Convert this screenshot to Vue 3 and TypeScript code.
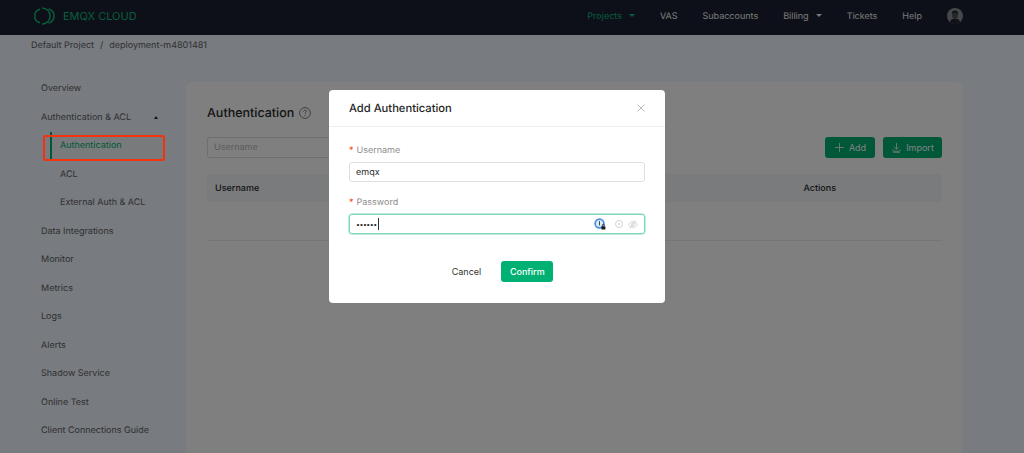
<template>
  <div class="page">
    <header class="topbar">
      <div class="brand">
        <svg class="brand-logo" width="26" height="18" viewBox="0 0 26 18" fill="none">
          <path d="M9 2.200A7 7 0 0 0 9 15.800" />
          <path d="M11 .9A8.100 8.100 0 0 1 11 17.100" />
          <path d="M17.500 2A7.200 7.200 0 0 1 17.500 16" />
        </svg>
        <span class="brand-name">EMQX CLOUD</span>
      </div>
      <nav class="nav">
        <a
          v-for="item in navItems"
          :key="item.label"
          class="nav-item"
          :class="{ active: item.active, caret: item.caret }"
        >{{ item.label }}</a>
        <svg class="avatar" width="16" height="16" viewBox="0 0 16 16">
          <circle cx="8" cy="8" r="8" fill="#8a9096" />
          <ellipse cx="8" cy="7" rx="3" ry="3.600" fill="#4a4c50" />
          <path d="M2.800 14.200c.8-2.600 2.800-3.600 5.200-3.600s4.400 1 5.200 3.600A8 8 0 0 1 2.800 14.200z" fill="#23252e" />
          <path d="M4.800 6c0-2.400 1.400-3.400 3.200-3.400s3.200 1 3.200 3.400c-1-1-2-1.400-3.200-1.400S5.800 5 4.800 6z" fill="#1c1d22" />
        </svg>
      </nav>
    </header>

    <div class="breadcrumb">
      <span>Default Project</span>
      <span class="sep">/</span>
      <span>deployment-m4801481</span>
    </div>

    <div class="body">
      <aside class="sidebar">
        <div
          v-for="item in menu"
          :key="item.label"
          class="menu-item"
          :class="{ sub: item.sub, selected: item.selected }"
        >
          {{ item.label }}
          <i v-if="item.open" class="menu-caret"></i>
        </div>
      </aside>

      <main class="card">
        <div class="title-row">
          <h2>Authentication</h2>
          <svg width="12" height="12" viewBox="0 0 12 12" fill="none" stroke="#5c5c5c">
            <circle cx="6" cy="6" r="5.400" stroke-width=".8" />
            <path d="M4.500 4.700c0-.9.7-1.500 1.500-1.500s1.500.6 1.500 1.400c0 1.200-1.500 1.200-1.500 2.400" stroke-width=".8" />
            <path d="M6 8.200v.9" stroke-width=".9" />
          </svg>
        </div>

        <div class="toolbar">
          <div class="search">Username</div>
          <div class="actions">
            <button class="btn">
              <svg width="11" height="11" viewBox="0 0 11 11" fill="none" stroke="currentColor" stroke-width=".8">
                <path d="M5.500 1v9M1 5.500h9" />
              </svg>
              Add
            </button>
            <button class="btn">
              <svg width="11" height="11" viewBox="0 0 11 11" fill="none" stroke="currentColor" stroke-width=".8">
                <path d="M5.500 1v6M3 4.800l2.500 2.500L8 4.800M1.500 7.500c0 1.200.6 1.700 1.500 1.700h5c.9 0 1.500-.5 1.500-1.700M2 10.300h7" />
              </svg>
              Import
            </button>
          </div>
        </div>

        <div class="table-head">
          <span>Username</span>
          <span>Actions</span>
        </div>
        <div class="table-empty"></div>
      </main>
    </div>

    <div class="mark"></div>
    <div class="mask"></div>

    <section class="modal">
      <div class="modal-head">
        <h3>Add Authentication</h3>
        <svg width="8" height="8" viewBox="0 0 8 8" stroke="#a8a8a8" stroke-width=".8">
          <path d="M.5.500l7 7M7.500.500l-7 7" />
        </svg>
      </div>
      <div class="modal-body">
        <label class="field-label">Username</label>
        <div class="field">emqx</div>
        <label class="field-label">Password</label>
        <div class="field focus">
          <span class="dots">••••••</span><i class="cursor"></i>
          <span class="field-icons">
            <svg width="12" height="12" viewBox="0 0 12 12">
              <circle cx="5.500" cy="5.500" r="5.200" fill="#4a90e2" />
              <circle cx="5.500" cy="5.500" r="3.500" fill="#dfe9f4" />
              <rect x="5" y="3.200" width="1" height="4.200" fill="#3a4654" />
              <rect x="7.400" y="8.200" width="4" height="3.300" rx=".5" fill="#1c1c1c" />
              <path d="M8.300 8.200V7.400a1.100 1.100 0 0 1 2.200 0v.8" fill="none" stroke="#1c1c1c" stroke-width=".7" />
            </svg>
            <svg class="clear" width="8" height="8" viewBox="0 0 10 10" fill="none" stroke="#c4c4c4" stroke-width=".9">
              <circle cx="5" cy="5" r="4.400" />
              <circle cx="5" cy="5" r="1.100" fill="#c4c4c4" stroke="none" />
            </svg>
            <svg width="10" height="9" viewBox="0 0 11 10" fill="none" stroke="#c4c4c4" stroke-width=".8">
              <path d="M.6 5C2 2.800 3.600 1.800 5.500 1.800S9 2.800 10.400 5C9 7.200 7.400 8.200 5.500 8.200S2 7.200.6 5z" />
              <circle cx="5.500" cy="5" r="1.700" />
              <path d="M2 9l7-8" />
            </svg>
          </span>
        </div>
      </div>
      <div class="modal-foot">
        <button class="link-btn">Cancel</button>
        <button class="primary-btn">Confirm</button>
      </div>
    </section>
  </div>
</template>

<script setup lang="ts">
interface NavItem {
  label: string
  active?: boolean
  caret?: boolean
}

interface MenuItem {
  label: string
  sub?: boolean
  open?: boolean
  selected?: boolean
}

const navItems: NavItem[] = [
  { label: 'Projects', active: true, caret: true },
  { label: 'VAS' },
  { label: 'Subaccounts' },
  { label: 'Billing', caret: true },
  { label: 'Tickets' },
  { label: 'Help' },
]

const menu: MenuItem[] = [
  { label: 'Overview' },
  { label: 'Authentication & ACL', open: true },
  { label: 'Authentication', sub: true, selected: true },
  { label: 'ACL', sub: true },
  { label: 'External Auth & ACL', sub: true },
  { label: 'Data Integrations' },
  { label: 'Monitor' },
  { label: 'Metrics' },
  { label: 'Logs' },
  { label: 'Alerts' },
  { label: 'Shadow Service' },
  { label: 'Online Test' },
  { label: 'Client Connections Guide' },
]
</script>

<style>
html,
body {
  margin: 0;
  overflow: hidden;
}
</style>

<style scoped>
.page {
  position: relative;
  width: 1024px;
  height: 453px;
  overflow: hidden;
  background: #f0f6ff;
  font-family: Inter, "Liberation Sans", sans-serif;
  font-size: 9px;
  text-rendering: geometricPrecision;
  color: #5f6165;
}

.topbar {
  box-sizing: border-box;
  height: 35px;
  display: flex;
  align-items: center;
  justify-content: space-between;
  padding: 0 61px 3px 31px;
  background: #1a2030;
}

.brand {
  display: flex;
  align-items: center;
  gap: 6px;
}

.brand-logo path {
  stroke: #12b87a;
  stroke-width: 1.500;
}

.brand-name {
  font-size: 11px;
  color: #12b87a;
}

.nav {
  display: flex;
  align-items: center;
}

.nav-item {
  margin-right: 25px;
  color: #f0f0f0;
  white-space: nowrap;
}

.nav-item.active {
  color: #12b87a;
}

.nav-item.caret::after {
  content: '';
  display: inline-block;
  margin-left: 7px;
  vertical-align: 2px;
  border: 3px solid transparent;
  border-top: 3px solid currentColor;
  border-bottom: 0;
}

.breadcrumb {
  height: 20px;
  display: flex;
  align-items: center;
  padding-left: 31px;
  color: #5e6166;
}

.sep {
  margin: 0 6px 0 6px;
}

.body {
  display: flex;
  padding-top: 27px;
}

.sidebar {
  width: 186px;
  flex-shrink: 0;
  margin-top: -7px;
}

.menu-item {
  position: relative;
  height: 28.500px;
  line-height: 28.500px;
  padding-left: 41px;
  color: #5f6165;
  white-space: nowrap;
}

.menu-item.sub {
  margin-left: 50px;
  padding-left: 10px;
  width: 105px;
}

.menu-item.selected {
  background: #f0f5f6;
  border-left: 2px solid #00b173;
  padding-left: 8px;
  color: #00b173;
}

.menu-caret {
  position: absolute;
  left: 154px;
  top: 12px;
  border: 2.500px solid transparent;
  border-bottom: 3px solid #2a2a2a;
  border-top: 0;
}

.card {
  flex: 1;
  margin-right: 61px;
  height: 400px;
  padding: 21px 21px;
  border-radius: 6px;
  background: #fff;
}

.title-row {
  display: flex;
  align-items: center;
  gap: 5px;
  height: 20px;
}

.title-row h2 {
  margin: 0;
  font-size: 12.500px;
  font-weight: 500;
  color: #2a2a2a;
}

.toolbar {
  display: flex;
  justify-content: space-between;
  margin-top: 14px;
}

.search {
  width: 200px;
  height: 19px;
  line-height: 19px;
  padding-left: 6px;
  border: 1px solid #dcdfe6;
  border-radius: 2px;
  color: #b8b8b8;
}

.actions {
  display: flex;
  gap: 8px;
}

.btn {
  display: flex;
  align-items: center;
  justify-content: center;
  gap: 4px;
  width: 50px;
  height: 21px;
  padding: 0;
  border: 0;
  border-radius: 3px;
  background: #00b173;
  color: #fff;
  font: inherit;
}

.btn + .btn {
  width: 59px;
}

.table-head {
  display: flex;
  justify-content: space-between;
  align-items: center;
  height: 28px;
  margin-top: 16px;
  padding: 0 106px 0 8px;
  border-radius: 3px;
  background: #f4f6f9;
  font-weight: 500;
  color: #2a2a2a;
}

.table-empty {
  height: 38px;
  border-bottom: 1px solid #ececec;
}

.mark {
  position: absolute;
  left: 43px;
  top: 135px;
  width: 118px;
  height: 22px;
  border: 2px solid #f5320f;
  border-radius: 3px;
  z-index: 2;
}

.mask {
  position: absolute;
  inset: 0;
  z-index: 1;
  background: rgba(0, 0, 0, 0.5);
}

.modal {
  position: absolute;
  left: 329px;
  top: 90px;
  z-index: 3;
  width: 336px;
  height: 213px;
  border-radius: 4px;
  background: #fff;
  color: #2a2a2a;
}

.modal-head {
  height: 36px;
  display: flex;
  align-items: center;
  justify-content: space-between;
  padding: 0 20px;
  border-bottom: 1px solid #eef0f3;
}

.modal-head h3 {
  margin: 0;
  font-size: 11.200px;
  font-weight: 500;
  color: #1f1f1f;
}

.modal-body {
  padding: 18px 20px 0;
}

.field-label {
  display: block;
  height: 12px;
  line-height: 12px;
  margin-bottom: 5px;
  color: #8d8d8d;
}

.field-label::before {
  content: '*';
  margin-right: 3px;
  color: #f5490f;
}

.field {
  display: flex;
  align-items: center;
  box-sizing: border-box;
  width: 296px;
  height: 20px;
  margin-bottom: 15px;
  padding: 0 6px;
  border: 1px solid #dcdfe6;
  border-radius: 3px;
}

.field.focus {
  border-color: #7fd9b5;
  box-shadow: 0 0 0 .5px #7fd9b5;
}

.dots {
  font-size: 7px;
  letter-spacing: -0.5px;
}

.cursor {
  width: 1px;
  height: 12px;
  margin-left: 1px;
  background: #333;
}

.field-icons {
  display: flex;
  align-items: center;
  margin-left: auto;
}

.clear {
  margin: 0 5px 0 9px;
}

.modal-foot {
  display: flex;
  justify-content: center;
  align-items: center;
  gap: 20px;
  margin-top: 27px;
  padding-left: 11px;
}

.link-btn {
  border: 0;
  padding: 0;
  background: none;
  color: #333;
  font: inherit;
}

.primary-btn {
  width: 52px;
  height: 21px;
  padding: 0;
  border: 0;
  border-radius: 3px;
  background: #00b173;
  color: #fff;
  font: inherit;
  font-weight: 500;
}
</style>
